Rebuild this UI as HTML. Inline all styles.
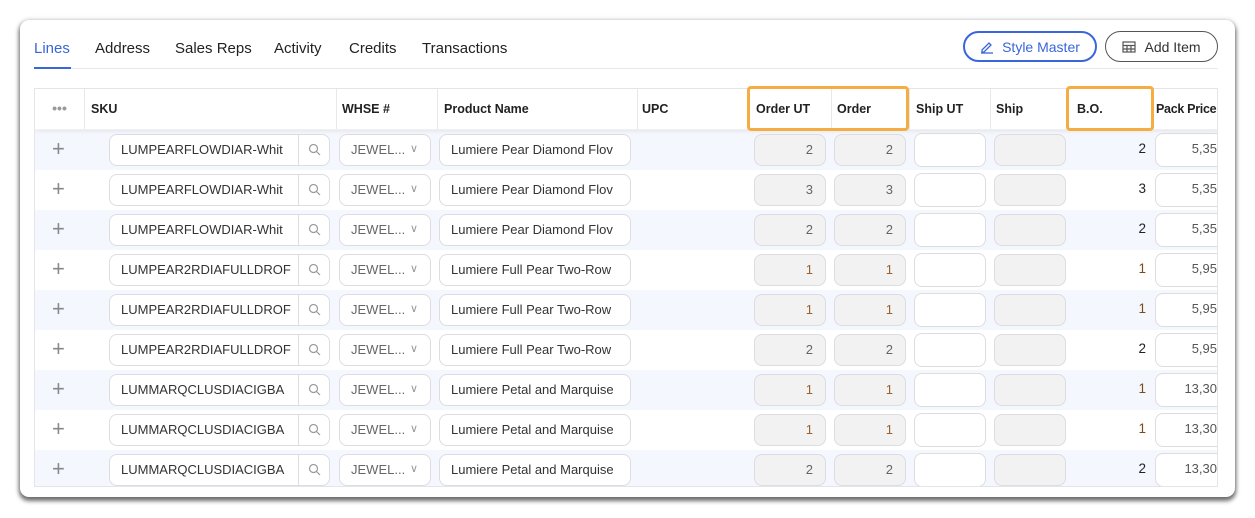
<!DOCTYPE html>
<html><head><meta charset="utf-8"><style>
*{box-sizing:border-box;margin:0;padding:0}
body{width:1255px;height:518px;background:#fff;font-family:"Liberation Sans",sans-serif;position:relative;overflow:hidden;color:#222}
.card{position:absolute;left:20px;top:20px;width:1215px;height:477px;background:#fff;border-radius:9px;box-shadow:0 3px 4px 1px rgba(0,0,0,.55),0 0 6px rgba(0,0,0,.15)}
.tab{position:absolute;top:40px;font-size:15px;color:#222}
.a{position:absolute}
.btn{position:absolute;top:31px;height:31px;border-radius:16px;font-size:14px;display:flex;align-items:center;justify-content:center;gap:8px}
.tbl{position:absolute;left:34px;top:88px;width:1184px;height:399px;border:1px solid #e3e5ea;overflow:hidden;background:#fff}
.hd{position:absolute;left:0;top:0;width:1184px;height:40px;background:#fff;box-shadow:0 2px 4px rgba(0,0,0,.08);font-size:12.5px;font-weight:bold;color:#222;z-index:2}
.hd div{position:absolute;top:0;height:40px;line-height:40px;border-left:1px solid #e6e8ec}
.row{position:absolute;left:-1px;width:1186px;height:40px}
.row.b{background:#f4f7fd}
.in{position:absolute;top:4px;height:32px;border:1px solid #dcdde0;border-radius:8px;background:#fff;font-size:13px;color:#333;line-height:30px;white-space:nowrap;overflow:hidden}
.g{background:#f2f2f2;text-align:right;padding-right:12px;color:#666}
.hl{position:absolute;border:3px solid #f5ad42;border-radius:4px;z-index:5}
</style></head><body>
<div class="card"></div>
<div class="tab" style="left:34px;color:#3a66db">Lines</div>
<div class="tab" style="left:95px">Address</div>
<div class="tab" style="left:175px">Sales Reps</div>
<div class="tab" style="left:274px">Activity</div>
<div class="tab" style="left:349px">Credits</div>
<div class="tab" style="left:422px">Transactions</div>
<div class="a" style="left:34px;top:68px;width:1184px;height:1px;background:#e6e8ec"></div>
<div class="a" style="left:34px;top:67px;width:37px;height:2px;background:#3a66db"></div>
<div class="btn" style="left:963px;width:134px;border:2px solid #3a66db;color:#3a66db"><svg width="14" height="14" viewBox="0 0 14 14" fill="none" stroke="#3a66db" stroke-width="1.3"><path d="M2 10l7-7 2 2-7 7H2z"/><path d="M1 13h12"/></svg>Style Master</div>
<div class="btn" style="left:1105px;width:113px;border:1px solid #555;color:#333"><svg width="14" height="12" viewBox="0 0 14 12" fill="none" stroke="#555" stroke-width="1.2"><rect x="1" y="1" width="12" height="10"/><path d="M1 4.5h12M1 8h12M5 4.5v6.5M9 4.5v6.5"/></svg>Add Item</div>
<div class="tbl">
<div class="hd">
<div style="left:0;width:49px;border:0;text-align:center;color:#999;font-size:14px;line-height:38px">•••</div>
<div style="left:49px;width:252px;padding-left:6px">SKU</div>
<div style="left:301px;width:101px;padding-left:5px">WHSE #</div>
<div style="left:402px;width:200px;padding-left:6px">Product Name</div>
<div style="left:602px;width:112px;padding-left:4px">UPC</div>
<div style="left:714px;width:82px;padding-left:6px">Order UT</div>
<div style="left:796px;width:78px;padding-left:5px">Order</div>
<div style="left:874px;width:81px;padding-left:6px">Ship UT</div>
<div style="left:955px;width:78px;padding-left:5px">Ship</div>
<div style="left:1033px;width:86px;padding-left:8px">B.O.</div>
<div style="left:1119px;width:70px;padding-left:2px;border:0;letter-spacing:-0.3px">Pack Price</div>
</div>
<div id="rows"></div>
</div>
<div class="hl" style="left:747px;top:86px;width:162px;height:45px"></div>
<div class="hl" style="left:1066px;top:86px;width:88px;height:45px"></div>
<script>
var d=[["LUMPEARFLOWDIAR-Whit","Lumiere Pear Diamond Flov",2,"5,35"],["LUMPEARFLOWDIAR-Whit","Lumiere Pear Diamond Flov",3,"5,35"],["LUMPEARFLOWDIAR-Whit","Lumiere Pear Diamond Flov",2,"5,35"],["LUMPEAR2RDIAFULLDROF","Lumiere Full Pear Two-Row",1,"5,95"],["LUMPEAR2RDIAFULLDROF","Lumiere Full Pear Two-Row",1,"5,95"],["LUMPEAR2RDIAFULLDROF","Lumiere Full Pear Two-Row",2,"5,95"],["LUMMARQCLUSDIACIGBA","Lumiere Petal and Marquise",1,"13,30"],["LUMMARQCLUSDIACIGBA","Lumiere Petal and Marquise",1,"13,30"],["LUMMARQCLUSDIACIGBA","Lumiere Petal and Marquise",2,"13,30"]];
var h="";
d.forEach(function(r,i){var c=r[2]==1?"#9a6230":"#666";
h+='<div class="row'+(i%2==0?' b':'')+'" style="top:'+(41+i*40)+'px">'+
'<div class="a" style="left:18px;top:6px;font-size:22px;color:#888;font-weight:300">+</div>'+
'<div class="in" style="left:75px;width:221px;padding-left:11px">'+r[0]+'<div class="a" style="left:188px;top:0;width:1px;height:30px;background:#dcdde0"></div><svg class="a" style="left:198px;top:8px" width="13" height="13" viewBox="0 0 13 13" fill="none" stroke="#999" stroke-width="1.2"><circle cx="5.5" cy="5.5" r="4"/><path d="M8.5 8.5l3.5 3.5"/></svg></div>'+
'<div class="in" style="left:305px;width:92px;padding-left:11px;color:#666">JEWEL...<span style="position:absolute;left:70px;top:-1px;color:#999;font-size:11px">&#8744;</span></div>'+
'<div class="in" style="left:405px;width:192px;padding-left:11px">'+r[1]+'</div>'+
'<div class="in g" style="left:720px;width:72px;color:'+c+'">'+r[2]+'</div>'+
'<div class="in g" style="left:800px;width:72px;color:'+c+'">'+r[2]+'</div>'+
'<div class="in" style="left:880px;width:72px;top:3px;height:34px"></div>'+
'<div class="in g" style="left:960px;width:72px"></div>'+
'<div class="a" style="left:1090px;top:11px;font-size:13.5px;width:22px;text-align:right;color:'+(r[2]==1?'#7a4a1a':'#222')+'">'+r[2]+'</div>'+
'<div class="in" style="left:1121px;width:80px;top:3px;height:34px;text-align:right;padding-right:17px;color:#555">'+r[3]+'</div></div>';});
document.getElementById("rows").innerHTML=h;
</script>
</body></html>
